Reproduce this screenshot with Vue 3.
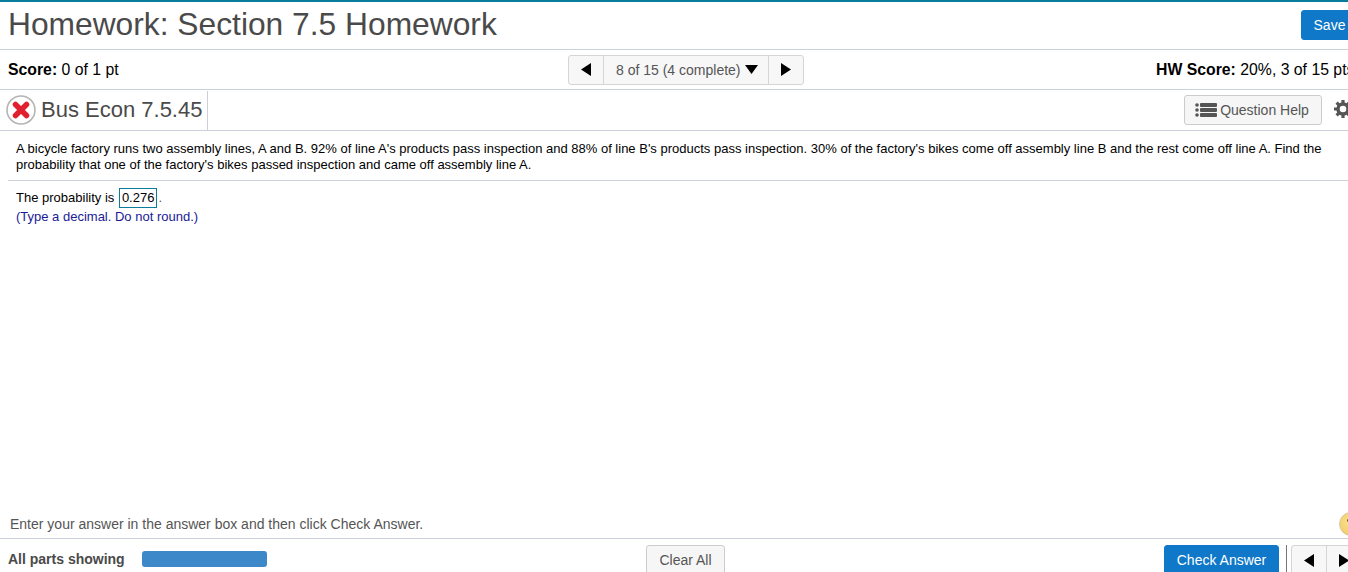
<template>
  <div class="viewport">
    <div class="page">
      <header class="title-row">
        <h1 class="title">Homework: Section 7.5 Homework</h1>
        <button class="btn primary save">Save</button>
      </header>

      <div class="score-row">
        <div class="score"><b>Score:</b> 0 of 1 pt</div>
        <div class="pager">
          <span class="pager-btn">
            <svg width="10" height="13" viewBox="0 0 10 13"><path d="M10 0V13L0 6.5Z" /></svg>
          </span>
          <span class="pager-label">
            8 of 15 (4 complete)
            <svg width="13" height="9" viewBox="0 0 13 9"><path d="M0 0H13L6.5 9Z" /></svg>
          </span>
          <span class="pager-btn">
            <svg width="10" height="13" viewBox="0 0 10 13"><path d="M0 0V13L10 6.5Z" /></svg>
          </span>
        </div>
        <div class="hw-score"><b>HW Score:</b> 20%, 3 of 15 pts</div>
      </div>

      <div class="question-row">
        <div class="question-name">
          <svg class="wrong" width="30" height="30" viewBox="0 0 30 30">
            <circle cx="15" cy="15" r="14" fill="#fff" stroke="#b5b5b5" stroke-width="1.6" />
            <path d="M9.5 9.5L20.5 20.5M20.5 9.5L9.5 20.5" stroke="#e0202f" stroke-width="5.5" stroke-linecap="round" />
          </svg>
          <span>Bus Econ 7.5.45</span>
        </div>
        <button class="btn help">
          <svg width="22" height="14" viewBox="0 0 22 14" fill="#555">
            <circle cx="2" cy="2" r="1.8" />
            <circle cx="2" cy="7" r="1.8" />
            <circle cx="2" cy="12" r="1.8" />
            <rect x="5" y="0" width="17" height="4" rx="1" />
            <rect x="5" y="5" width="17" height="4" rx="1" />
            <rect x="5" y="10" width="17" height="4" rx="1" />
          </svg>
          Question Help
        </button>
        <svg class="gear" width="18" height="18" viewBox="0 0 18 18" fill="none">
          <circle cx="9" cy="9" r="5" stroke="#555" stroke-width="3.4" />
          <path d="M9 0V4M9 14V18M0 9H4M14 9H18M2.6 2.6L5.4 5.4M12.6 12.6L15.4 15.4M15.4 2.6L12.6 5.4M5.4 12.6L2.6 15.4" stroke="#555" stroke-width="3.2" />
        </svg>
      </div>

      <main class="content">
        <p class="problem">
          A bicycle factory runs two assembly lines, A and B. 92% of line A's products pass inspection and 88% of line B's products pass inspection. 30% of the factory's bikes come off assembly line B and the rest come off line A. Find the probability that one of the factory's bikes passed inspection and came off assembly line A.
        </p>
        <div class="answer">
          <div>The probability is <span class="answer-box">0.276</span><span class="dot">.</span></div>
          <div class="note">(Type a decimal. Do not round.)</div>
        </div>
      </main>

      <div class="hint-row">
        <span>Enter your answer in the answer box and then click Check Answer.</span>
        <span class="smiley"></span>
      </div>

      <footer class="bottom-row">
        <div class="parts">
          <b>All parts showing</b>
          <span class="progress"></span>
        </div>
        <button class="btn clear">Clear All</button>
        <div class="actions">
          <button class="btn primary check">Check Answer</button>
          <span class="divider"></span>
          <div class="pager small">
            <span class="pager-btn">
              <svg width="10" height="13" viewBox="0 0 10 13"><path d="M10 0V13L0 6.5Z" /></svg>
            </span>
            <span class="pager-btn">
              <svg width="10" height="13" viewBox="0 0 10 13"><path d="M0 0V13L10 6.5Z" /></svg>
            </span>
          </div>
        </div>
      </footer>
    </div>
  </div>
</template>

<script setup>
</script>

<style>
html, body {
  margin: 0;
  background: #fff;
}
</style>

<style scoped>
.viewport {
  width: 1348px;
  height: 572px;
  overflow: hidden;
  font-family: "Liberation Sans", Arial, sans-serif;
  font-size: 14px;
  color: #000;
}

.page {
  width: 1372px;
  height: 572px;
  display: flex;
  flex-direction: column;
  box-sizing: border-box;
  border-top: 2px solid #0a7d9c;
}

.btn {
  font-family: inherit;
  font-size: 14px;
  border: 1px solid #ccc;
  border-radius: 3px;
  background: #f6f6f6;
  color: #555;
  padding: 0;
}

.btn.primary {
  background: #0f78c8;
  border-color: #0f78c8;
  color: #fff;
}

.title-row {
  height: 48px;
  flex: none;
  box-sizing: border-box;
  border-bottom: 1px solid #ccd0da;
  display: flex;
  align-items: flex-start;
  justify-content: space-between;
  padding: 0 14px 0 8px;
}

.title {
  margin: 4px 0 0;
  font-size: 31.75px;
  line-height: 37px;
  font-weight: 400;
  color: #4a4a4a;
}

.save {
  width: 57px;
  height: 30px;
  margin-top: 8px;
}

.score-row {
  height: 40px;
  flex: none;
  box-sizing: border-box;
  border-bottom: 1px solid #ccd0da;
  display: grid;
  grid-template-columns: 1fr auto 1fr;
  align-items: center;
  font-size: 15.8px;
}

.score {
  padding-left: 8px;
}

.hw-score {
  justify-self: end;
  width: 216px;
  white-space: nowrap;
}

.pager {
  display: flex;
  height: 30px;
  box-sizing: border-box;
  border: 1px solid #d5d5d5;
  border-radius: 3px;
  background: #f7f7f7;
  font-size: 14px;
}

.pager-btn {
  width: 34px;
  display: flex;
  align-items: center;
  justify-content: center;
}

.pager-btn + .pager-label,
.pager-label + .pager-btn,
.pager-btn + .pager-btn {
  border-left: 1px solid #d5d5d5;
}

.pager-label {
  width: 165px;
  box-sizing: border-box;
  display: flex;
  align-items: center;
  gap: 4px;
  padding-left: 12px;
  color: #555;
  white-space: nowrap;
}

.question-row {
  height: 41px;
  flex: none;
  box-sizing: border-box;
  border-bottom: 1px solid #ccd0da;
  display: flex;
  align-items: center;
  padding: 0 13px 0 6px;
}

.question-name {
  display: flex;
  align-items: center;
  gap: 5px;
  height: 39px;
  box-sizing: border-box;
  padding: 0 5px 2px 0;
  margin-top: 1px;
  border-right: 1px solid #ccd0da;
  font-size: 22px;
  color: #4a4a4a;
}

.help {
  margin-left: auto;
  width: 138px;
  height: 30px;
  display: flex;
  align-items: center;
  justify-content: center;
  gap: 3px;
  padding-right: 2px;
  box-sizing: border-box;
}

.gear {
  margin: -3px 7px 0 12px;
}

.content {
  flex: 1;
  padding: 0 24px 0 8px;
  font-size: 13px;
}

.problem {
  margin: 0;
  padding: 10px 8px 7px;
  line-height: 16px;
  border-bottom: 1px solid #ccd0da;
}

.answer {
  padding: 7px 8px 0;
  line-height: 19px;
}

.answer-box {
  display: inline-block;
  box-sizing: border-box;
  height: 20px;
  line-height: 18px;
  padding: 0 2px;
  margin-left: 1px;
  border: 1px solid #0a7d9c;
}

.dot {
  color: #555;
  margin-left: 1px;
}

.note {
  margin-top: -1px;
  color: #1a1a96;
}

.hint-row {
  height: 29px;
  flex: none;
  box-sizing: border-box;
  padding: 0 9px 0 10px;
  border-bottom: 1px solid #ccd0da;
  display: flex;
  justify-content: space-between;
  font-size: 14px;
  line-height: 29px;
  color: #555;
}

.smiley {
  position: relative;
  width: 24px;
  height: 24px;
  margin-top: 2px;
  border-radius: 50%;
  background: radial-gradient(circle at 40% 40%, #fbe08c, #eec25a);
  border: 1px solid #d6c8a0;
  box-sizing: border-box;
}

.smiley::after {
  content: "";
  position: absolute;
  left: 7px;
  top: 6px;
  width: 3px;
  height: 3px;
  border-radius: 50%;
  background: #6b5a2a;
}

.bottom-row {
  height: 33px;
  flex: none;
  display: grid;
  grid-template-columns: 1fr auto 1fr;
  padding-top: 6px;
  box-sizing: border-box;
}

.parts {
  display: flex;
  gap: 17px;
  align-items: flex-start;
  padding-left: 8px;
  font-size: 14px;
  line-height: 30px;
  color: #4a4a4a;
  margin-top: -1px;
}

.progress {
  width: 125px;
  height: 16px;
  margin-top: 7px;
  border-radius: 3px;
  background: #3d88c9;
}

.clear {
  width: 79px;
  height: 30px;
  margin-left: -1px;
}

.actions {
  display: flex;
  align-items: flex-start;
  padding-left: 439px;
}

.check {
  flex: none;
  width: 115px;
  height: 30px;
}

.divider {
  flex: none;
  width: 1px;
  height: 30px;
  margin: 0 4px 0 7px;
  background: #777;
}

.pager.small {
  flex: none;
  height: 30px;
}
</style>
